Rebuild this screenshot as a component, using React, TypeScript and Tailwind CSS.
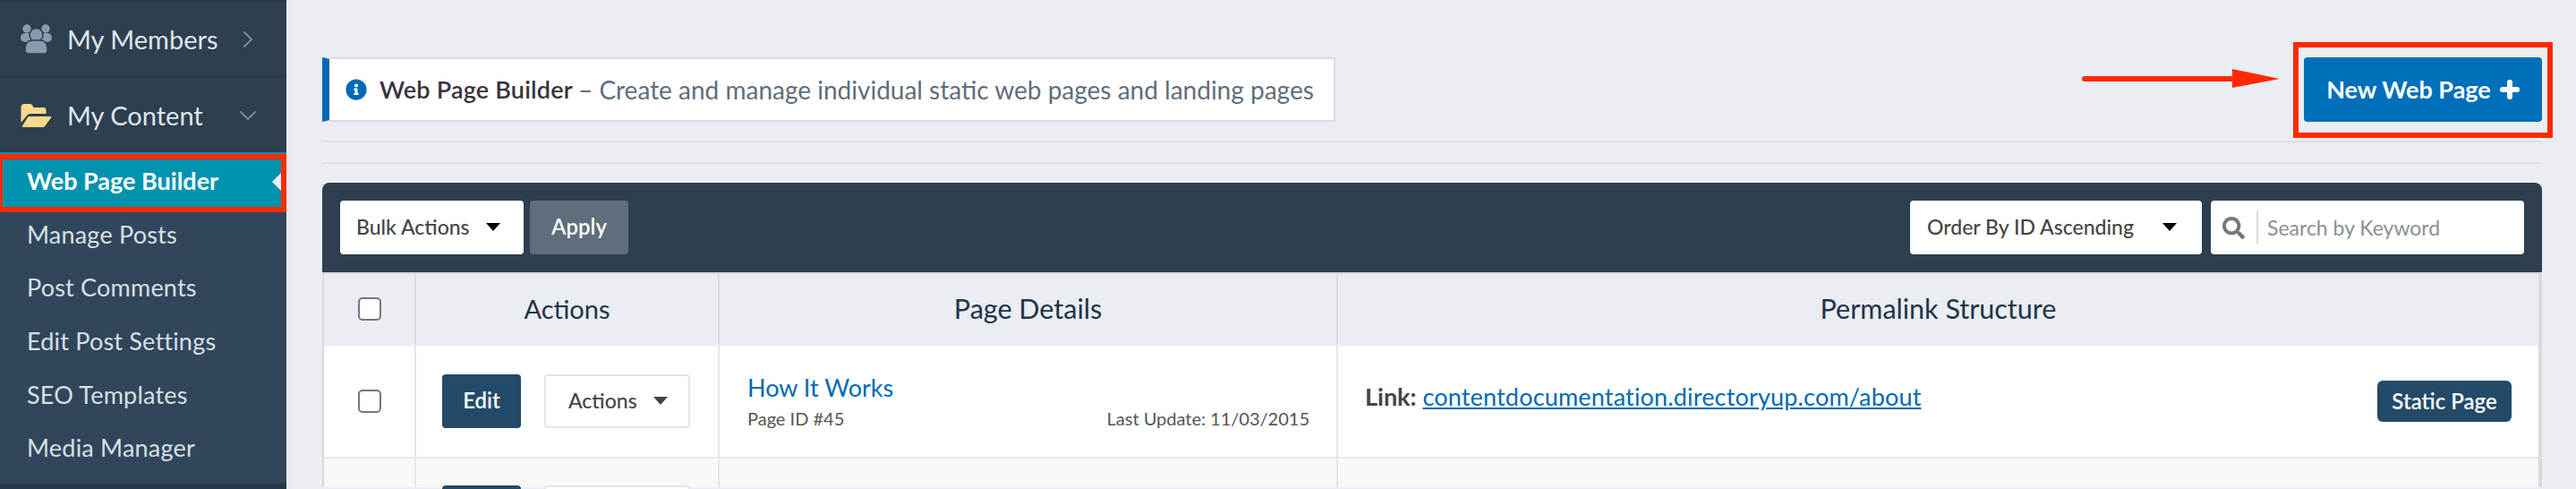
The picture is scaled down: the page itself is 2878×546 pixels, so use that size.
import { ChevronDown, ChevronRight } from "lucide-react"
import { FaInfoCircle, FaSearch } from "react-icons/fa"

function Caret({ className }: { className: string }) {
  return <span className={`inline-block h-0 w-0 border-x-[8px] border-t-[9px] border-x-transparent ${className}`} />
}

function MembersIcon() {
  return (
    <svg className="h-[33px] w-[35px] shrink-0 text-[#8a9bad]" viewBox="0 0 35 33" fill="currentColor">
      <circle cx="7" cy="5" r="4.7" />
      <circle cx="28" cy="5" r="4.7" />
      <rect x="0" y="10" width="35" height="10" rx="5" />
      <circle cx="17.5" cy="12" r="7.5" stroke="#2e3f50" strokeWidth="1.5" />
      <path d="M5 27q0-9 9-9h7q9 0 9 9v2q0 4-4 4H9q-4 0-4-4z" stroke="#2e3f50" strokeWidth="1.5" />
    </svg>
  )
}

function FolderIcon() {
  return (
    <svg className="h-[26px] w-[35px] shrink-0 text-[#fbd88e]" viewBox="0 0 34 26" fill="currentColor">
      <path d="M0 4q0-4 4-4h6q2 0 3 2l1 2h11q3 0 3 3v4H10q-2 0-3.5 2L0 21z" />
      <path d="M9.500 14H33q1.500 0 .6 1.500L26.500 25q-.7 1-2 1H2.500q-1.500 0-1-1.500L7.500 15q.7-1 2-1z" />
    </svg>
  )
}

function Sidebar() {
  const links = ["Manage Posts", "Post Comments", "Edit Post Settings", "SEO Templates", "Media Manager"]
  return (
    <aside className="flex h-[546px] w-[320px] shrink-0 flex-col overflow-hidden bg-[#2e3f50]">
      <div className="h-[2px] shrink-0 bg-[#27374a]" />
      <div className="flex h-[85px] shrink-0 items-center border-b-2 border-[#27374a] pl-[23px]">
        <MembersIcon />
        <span className="ml-[17px] w-[186px] whitespace-nowrap text-[29px] text-[#dfe7ee]">My Members</span>
        <ChevronRight className="h-[32px] w-[32px] text-[#7d8c9b]" strokeWidth={1.4} />
      </div>
      <div className="flex h-[83px] shrink-0 items-center pl-[23px]">
        <FolderIcon />
        <span className="ml-[17px] w-[186px] whitespace-nowrap text-[29px] text-[#dfe7ee]">My Content</span>
        <ChevronDown className="h-[32px] w-[32px] text-[#7d8c9b]" strokeWidth={1.4} />
      </div>
      <div className="flex flex-1 flex-col bg-[#32465b]">
        <div className="relative flex h-[65px] shrink-0 items-center bg-[#0093ae] pl-[30px] text-[27px] font-bold text-white">
          Web Page Builder
          <span className="absolute right-[5px] top-1/2 h-0 w-0 -translate-y-1/2 border-y-[11px] border-r-[11px] border-y-transparent border-r-[#eceff3]" />
        </div>
        <div className="-mt-[3px] flex flex-col">
          {links.map((l) => (
            <div key={l} className="flex h-[59.7px] shrink-0 items-center pl-[30px] text-[27px] tracking-[0.2px] text-[#d6e0e6]">
              {l}
            </div>
          ))}
        </div>
      </div>
      <div className="h-[6px] shrink-0 bg-[#27374a]" />
    </aside>
  )
}

function Toolbar() {
  return (
    <div className="flex h-[100px] items-center justify-between rounded-t-[8px] bg-[#2e3f50] px-[20px]">
      <div className="flex gap-[7px]">
        <div className="flex h-[60px] w-[205px] items-center justify-between rounded-[4px] bg-white pb-[2px] pl-[18px] pr-[26px] text-[23px] font-medium text-[#444]">
          Bulk Actions
          <Caret className="border-t-black" />
        </div>
        <div className="flex h-[60px] w-[110px] items-center justify-center rounded-[4px] bg-[#5f6d7c] pb-[2px] text-[24px] font-semibold text-white">
          Apply
        </div>
      </div>
      <div className="flex gap-[10px]">
        <div className="flex h-[60px] w-[326px] items-center justify-between rounded-[4px] bg-white pb-[2px] pl-[19px] pr-[28px] text-[23px] font-medium text-[#444]">
          Order By ID Ascending
          <Caret className="border-t-black" />
        </div>
        <div className="flex h-[60px] w-[350px] items-center rounded-[4px] bg-white">
          <span className="flex w-[51px] shrink-0 justify-center">
            <FaSearch className="h-[25px] w-[25px] text-[#777]" />
          </span>
          <span className="flex h-[38px] items-center border-l-2 border-[#ddd] pl-[10px] text-[23px] text-[#8a8f94]">
            Search by Keyword
          </span>
        </div>
      </div>
    </div>
  )
}

function Table() {
  return (
    <div className="border-x-2 border-t-2 border-[#d8dadd] border-r-4">
      <div className="flex h-[80px] bg-[#eaedf2] pb-[2px] text-[30.500px] text-[#1f3349]">
        <div className="flex w-[103px] shrink-0 items-center justify-center border-r-2 border-[#d8dadd]">
          <span className="h-[26px] w-[26px] rounded-[5px] border-2 border-[#767676] bg-white" />
        </div>
        <div className="flex w-[339px] shrink-0 items-center justify-center border-r-2 border-[#d8dadd] text-[29px]">Actions</div>
        <div className="flex w-[691px] shrink-0 items-center justify-center border-r-2 border-[#d8dadd]">Page Details</div>
        <div className="flex flex-1 items-center justify-center">Permalink Structure</div>
      </div>
      <div className="flex h-[124px] bg-white">
        <div className="flex w-[103px] shrink-0 items-center justify-center border-r-2 border-[#e5e6e8]">
          <span className="h-[26px] w-[26px] rounded-[5px] border-2 border-[#767676] bg-white" />
        </div>
        <div className="flex w-[339px] shrink-0 items-center gap-[26px] border-r-2 border-[#e5e6e8] pl-[29px]">
          <div className="flex h-[60px] w-[88px] items-center justify-center rounded-[4px] bg-[#234a68] pb-[2px] text-[24px] font-semibold text-white">
            Edit
          </div>
          <div className="flex h-[60px] w-[163px] items-center justify-between rounded-[4px] border-2 border-[#e3e3e3] bg-white pb-[2px] pl-[25px] pr-[23px] text-[23px] font-medium text-[#444]">
            Actions
            <Caret className="border-t-[#444]" />
          </div>
        </div>
        <div className="flex w-[691px] shrink-0 flex-col justify-center border-r-2 border-[#e5e6e8] pl-[31px] pr-[30px]">
          <div className="text-[27px] leading-[36px] text-[#0069b4]">How It Works</div>
          <div className="mt-[2px] flex justify-between text-[20px] leading-[28px] text-[#555]">
            <span>Page ID #45</span>
            <span>Last Update: 11/03/2015</span>
          </div>
        </div>
        <div className="flex flex-1 items-center justify-between pl-[30px] pr-[30px]">
          <div className="-mt-[10px] whitespace-nowrap text-[27px] text-[#444]">
            <span className="font-bold">Link:</span>{" "}
            <span className="tracking-[0.17px] text-[#0069b4] underline">contentdocumentation.directoryup.com/about</span>
          </div>
          <div className="flex h-[46px] w-[150px] items-center justify-center rounded-[6px] bg-[#234a68] text-[24px] font-semibold text-white">
            Static Page
          </div>
        </div>
      </div>
      <div className="flex h-[34px] border-t-2 border-[#e5e6e8] bg-[#f8f8f8]">
        <div className="w-[103px] shrink-0 border-r-2 border-[#e5e6e8]" />
        <div className="flex w-[339px] shrink-0 items-start gap-[26px] border-r-2 border-[#e5e6e8] pl-[29px] pt-[30px]">
          <div className="h-[60px] w-[88px] rounded-[4px] bg-[#234a68]" />
          <div className="h-[60px] w-[163px] rounded-[4px] border-2 border-[#e3e3e3] bg-white" />
        </div>
        <div className="w-[691px] shrink-0 border-r-2 border-[#e5e6e8]" />
      </div>
    </div>
  )
}

export default function App() {
  return (
    <div className="relative flex h-[546px] w-[2878px] overflow-hidden bg-[#eaedf2] font-['Lato','Liberation_Sans',sans-serif]">
      <Sidebar />
      <main className="ml-[40px] w-[2480px]">
        <div className="flex h-[159px] items-start justify-between border-b-2 border-[#dedfe2] pt-[64px]">
          <div className="flex h-[72px] w-[1132px] items-center border-y-2 border-r-2 border-[#dcdcdc] border-l-[8px] border-l-[#0069b4] bg-white pl-[18px] text-[28px] text-[#5f6d7c]">
            <FaInfoCircle className="mr-[14px] h-[24px] w-[24px] shrink-0 text-[#0069b4]" />
            <span className="text-[27px] font-semibold tracking-[0.2px] text-[#3a3340]">Web Page Builder</span>
            <span className="ml-[6px] whitespace-nowrap">– Create and manage individual static web pages and landing pages</span>
          </div>
          <div className="flex h-[72px] w-[266px] items-center justify-center gap-[10px] rounded-[4px] bg-[#006fb9] text-[27px] font-bold text-white">
            New Web Page
            <svg className="h-[22px] w-[22px]" viewBox="0 0 22 22" stroke="currentColor" strokeWidth="6" strokeLinecap="round">
              <path d="M11 3V19M3 11H19" />
            </svg>
          </div>
        </div>
        <div className="mt-[22px] border-t-2 border-[#dedfe2] pt-[21px]">
          <Toolbar />
          <Table />
        </div>
      </main>

      {/* red annotations drawn over the screenshot */}
      <div className="absolute left-0 top-[172px] h-[65px] w-[320px] border-x-[3px] border-y-[6px] border-r-[6px] border-[#ff2a00]" />
      <div className="absolute left-[2562px] top-[47px] h-[107px] w-[290px] border-[6px] border-[#ff2a00]" />
      <svg className="absolute left-[2324px] top-[75px]" width="226" height="26" viewBox="0 0 226 26">
        <path d="M5 13 H172" stroke="#ff2a00" strokeWidth="6" strokeLinecap="round" />
        <path d="M170 2 L223 13 L170 23 Z" fill="#ff2a00" />
      </svg>
    </div>
  )
}
